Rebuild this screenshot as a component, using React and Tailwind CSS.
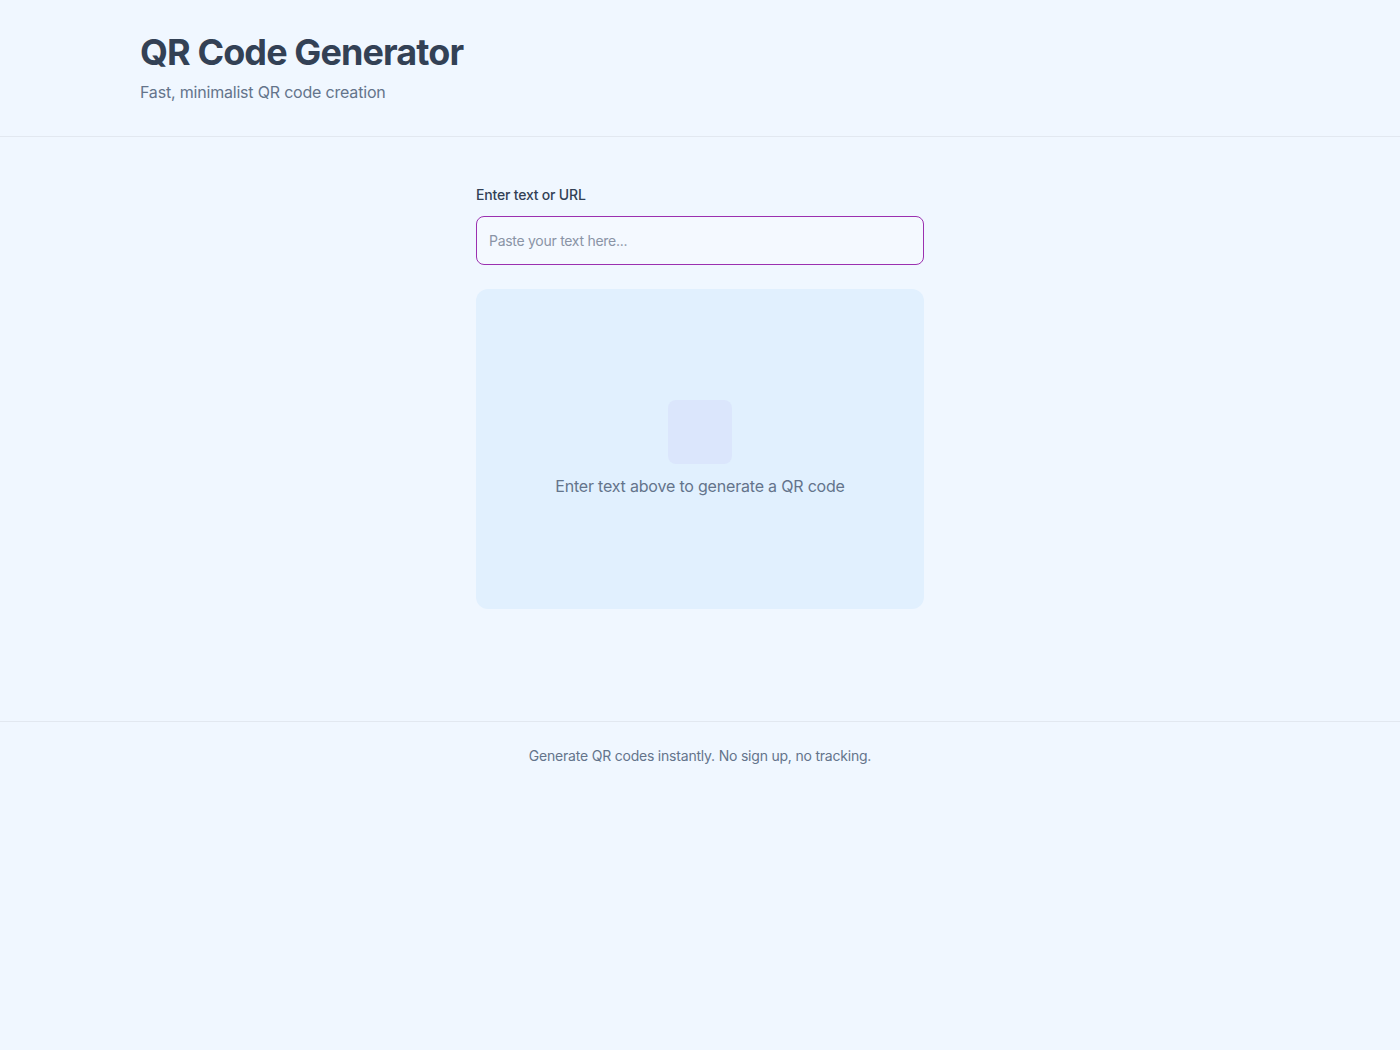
export default function App() {
  return (
    <div
      className="min-h-screen bg-[#f0f7ff] text-[#334155] tracking-[-0.012em]"
      style={{ fontFamily: '"Inter", "Noto Sans", sans-serif' }}
    >
      <header className="border-b border-[#e2e8f0]">
        <div className="mx-auto max-w-6xl px-4 py-8">
          <h1 className="text-4xl font-bold tracking-tight text-[#334155]">QR Code Generator</h1>
          <p className="mt-2 text-base text-[#64748b]">Fast, minimalist QR code creation</p>
        </div>
      </header>

      <main className="pt-12 pb-28">
        <div className="mx-auto w-full max-w-md">
          <label className="block text-sm font-medium text-[#334155]">Enter text or URL</label>
          <input
            type="text"
            autoFocus
            placeholder="Paste your text here..."
            className="mt-[11px] block h-[49px] w-full rounded-lg border border-[#9b30b0] bg-[#f4f9ff] px-3 text-sm tracking-[-0.02em] text-[#334155] outline-none placeholder:text-[#8a94a6]"
          />
          <div className="mt-6 flex h-80 flex-col items-center justify-center rounded-xl bg-[#e1f0fe]">
            <div className="h-16 w-16 rounded-lg bg-[#dbe6fc]" />
            <p className="mt-[10px] text-base text-[#64748b]">Enter text above to generate a QR code</p>
          </div>
        </div>
      </main>

      <footer className="border-t border-[#e2e8f0] py-6 text-center">
        <p className="text-sm tracking-[-0.015em] text-[#64748b]">Generate QR codes instantly. No sign up, no tracking.</p>
      </footer>
    </div>
  );
}
